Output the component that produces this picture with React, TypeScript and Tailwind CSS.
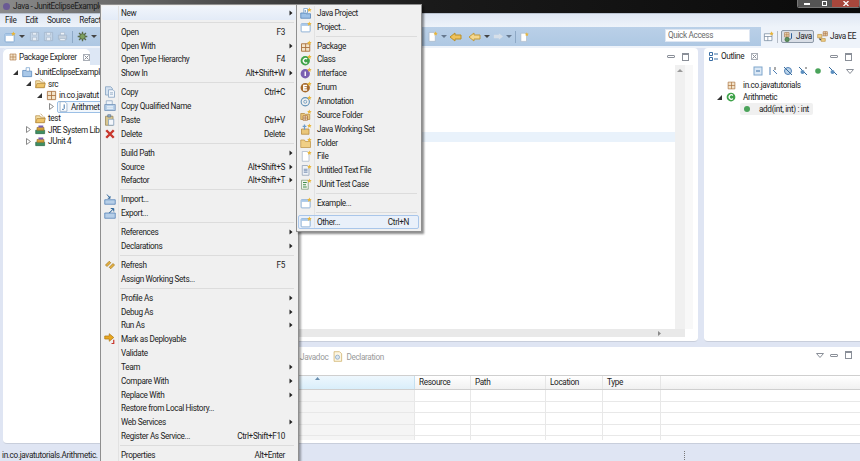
import React from "react";

type IconName = "wiz" | "javaProj" | "pkg" | "cls" | "iface" | "enum" | "anno" | "srcFolder" | "workSet" | "folder" | "file" | "txt" | "junit" | "copy" | "copyQ" | "paste" | "del" | "imp" | "exp" | "refresh" | "deploy" | "pkgPlain" | "clsPlain" | "jfile" | "lib" | "project" | "save" | "print" | "gear" | "decl" | "persp" | "javaP" | "eeP" | "openFolder";

function Star() {
  return <path d="M12.5 0.5l.9 2 2.1.3-1.5 1.5.4 2.1-1.9-1-1.9 1 .4-2.1-1.5-1.5 2.1-.3z" fill="#e8b53a" />;
}
function Circ({ c, d }: { c: string; d: string }) {
  return (
    <>
      <circle cx="7" cy="9" r="6.2" fill={c} />
      <path d={d} fill="none" stroke="#fff" strokeWidth="1.8" />
    </>
  );
}
function Icon({ name, size = 12 }: { name: IconName; size?: number }) {
  let g: React.ReactNode = null;
  if (name === "wiz") g = <><rect x="1.5" y="3.5" width="12" height="11" rx="1" fill="#fff" stroke="#6d9bc9" /><rect x="1.5" y="3.5" width="12" height="3" fill="#a9c8e8" /><Star /></>;
  if (name === "javaProj") g = <><path d="M1 8h6l1 1h6v6H1z" fill="#9cc0e6" stroke="#4f7fb4" /><path d="M5 2h5v6H5z" fill="#fff" stroke="#6d9bc9" /><path d="M7 4v3" stroke="#3a6ea5" /><Star /></>;
  if (name === "pkg") g = <><path d="M2 5h11v10H2zM2 10h11M7.5 5v10" fill="#f3e3c8" stroke="#a9703d" strokeWidth="1.2" /><Star /></>;
  if (name === "pkgPlain") g = <path d="M2 2h12v12H2zM2 8h12M8 2v12" fill="#f3e3c8" stroke="#a9703d" strokeWidth="1.2" />;
  if (name === "cls") g = <><Circ c="#3fa34a" d="M9.5 6.8a3 3 0 1 0 0 4.4" /><Star /></>;
  if (name === "clsPlain") g = <><circle cx="8" cy="8" r="7" fill="#3fa34a" /><path d="M11 5.500a3.500 3.500 0 1 0 0 5" fill="none" stroke="#fff" strokeWidth="2" /></>;
  if (name === "iface") g = <><Circ c="#7a5fb0" d="M7 6v6" /><Star /></>;
  if (name === "enum") g = <><Circ c="#a5682a" d="M9.5 6H5v6h4.500M5 9h4" /><Star /></>;
  if (name === "anno") g = <><circle cx="7" cy="9" r="5.500" fill="none" stroke="#5f8fb5" strokeWidth="1.4" /><circle cx="7" cy="9" r="2" fill="none" stroke="#5f8fb5" /><Star /></>;
  if (name === "srcFolder") g = <><path d="M1 6h5l1 1h6v7H1z" fill="#eac77a" stroke="#b3873c" /><path d="M4 9h6v6H4zM4 12h6M7 9v6" fill="#f3e3c8" stroke="#a9703d" /><Star /></>;
  if (name === "workSet") g = <><path d="M2 8h10v7H2z" fill="#eac77a" stroke="#b3873c" /><path d="M6 2v7M3.500 4.500h5" stroke="#6d9bc9" strokeWidth="1.6" /><Star /></>;
  if (name === "folder") g = <><path d="M1 4h5l1 2h7v8H1z" fill="#f0cf85" stroke="#bd9346" /><Star /></>;
  if (name === "openFolder") g = <><path d="M1 4h6l1 2h6v8H1z" fill="#f4e0aa" stroke="#b3873c" /><path d="M1 14l2-6h12l-2 6z" fill="#eec46a" stroke="#b3873c" /><path d="M8 1l3 3" stroke="#b3873c" /></>;
  if (name === "file") g = <><path d="M3 2h7l2 2v11H3z" fill="#fff" stroke="#a8b6c6" /><Star /></>;
  if (name === "txt") g = <><path d="M3 2h7l2 2v11H3z" fill="#eef2f7" stroke="#8c9bb0" /><path d="M5 7h5M5 9h5M5 11h5" stroke="#5876a0" /><Star /></>;
  if (name === "junit") g = <><path d="M2 3h9v12H2z" fill="#f2f6ee" stroke="#7e9a76" /><path d="M4 6h5M4 9h4M4 12h5" stroke="#3d8a45" strokeWidth="1.3" /><Star /></>;
  if (name === "copy") g = <><path d="M2 1h7l2 2v9H2z" fill="#d5e2f0" stroke="#7f9dbd" /><path d="M6 5h6l2 2v8H6z" fill="#f2f6fb" stroke="#7f9dbd" /><path d="M8 9h4M8 11h4" stroke="#8ea7c2" /></>;
  if (name === "copyQ") g = <><path d="M3 1h8v6H3z" fill="#eef3f9" stroke="#8ea7c2" /><path d="M1 6h14v8H1z" fill="#b7cfe8" stroke="#6d8fb5" /><path d="M4 9h8M4 11h8" stroke="#fff" /></>;
  if (name === "paste") g = <><path d="M2 3h10v12H2z" fill="#d9c690" stroke="#96855a" /><path d="M5 1h4v3H5z" fill="#9fb5cc" stroke="#62788f" /><path d="M6 7h7v8H6z" fill="#f3f6fb" stroke="#7f9dbd" /></>;
  if (name === "del") g = <path d="M3 3l10 10M13 3L3 13" stroke="#c8372d" strokeWidth="3.2" />;
  if (name === "imp") g = <><path d="M1 9h14v6H1z" fill="#b7cfe8" stroke="#4f7fb4" /><path d="M4 2l4 5M8 7V4M8 7H5" fill="none" stroke="#33699c" strokeWidth="1.3" /></>;
  if (name === "exp") g = <><path d="M1 8h14v7H1z" fill="#b7cfe8" stroke="#4f7fb4" /><path d="M7 8l6-6M13 2v4M13 2H9" fill="none" stroke="#33699c" strokeWidth="1.4" /></>;
  if (name === "refresh") g = <><path d="M2 8l5-5 2 2-5 5z" fill="#e5b040" stroke="#a37a22" /><path d="M14 8l-5 5-2-2 5-5z" fill="#e5b040" stroke="#a37a22" /></>;
  if (name === "deploy") g = <><path d="M1 4h6V1l6 5-6 5V8H1z" fill="#e8a722" stroke="#b27a10" /><path d="M13 9v5h-3" fill="none" stroke="#c8372d" strokeWidth="1.6" /></>;
  if (name === "jfile") g = <><path d="M3 1h7l3 3v11H3z" fill="#fff" stroke="#7f9dbd" /><path d="M9 5v6a2 2 0 0 1-3 1" fill="none" stroke="#3a6ea5" strokeWidth="1.4" /></>;
  if (name === "lib") g = <><path d="M1 9h13v5H1z" fill="#3e8f63" stroke="#2b6a48" /><path d="M3 5h10v4H3z" fill="#d8a23a" stroke="#99701d" /><path d="M5 2h7v3H5z" fill="#7a5fb0" /></>;
  if (name === "project") g = <><path d="M1 5h5l1 1h7v8H1z" fill="#a9c8e8" stroke="#4f7fb4" /><path d="M6 1h5v5H6z" fill="#fff" stroke="#6d9bc9" /></>;
  if (name === "save") g = <><path d="M2 2h12v12H2z" fill="#c5d6e8" stroke="#9fb2c7" /><path d="M5 2h6v4H5zM5 9h6v5H5z" fill="#e6edf5" stroke="#a8b8ca" /></>;
  if (name === "print") g = <><path d="M5 2h6v4H5z" fill="#eef3f9" stroke="#a8b8ca" /><path d="M2 6h12v6H2z" fill="#c5d0dc" stroke="#9fb2c7" /><path d="M4 11h8v3H4z" fill="#eef3f9" stroke="#a8b8ca" /></>;
  if (name === "gear") g = <><path d="M8 1v14M1 8h14M3 3l10 10M13 3L3 13" stroke="#5a6b4a" strokeWidth="2" /><circle cx="8" cy="8" r="4" fill="#7ea05e" stroke="#4a5a3a" /></>;
  if (name === "decl") g = <><path d="M3 1h8l3 3v11H3z" fill="#fdf6e3" stroke="#c9a95a" /><circle cx="8" cy="9" r="3" fill="#d8e6f3" stroke="#7f9dbd" /></>;
  if (name === "persp") g = <><path d="M2 4h11v10H2zM2 8h11M7 8v6" fill="#fff" stroke="#6b7f96" /><Star /></>;
  if (name === "javaP") g = <><path d="M1 1h7v7H1zM1 4.500h7M4.500 1v7" fill="#f3e3c8" stroke="#a9703d" /><circle cx="5" cy="12" r="3.500" fill="#5c8f5c" stroke="#3a6a3a" /><path d="M12 2v8a2 2 0 0 1-3 1" fill="none" stroke="#2f5f9a" strokeWidth="1.6" /></>;
  if (name === "eeP") g = <><path d="M9 1h6v6H9zM9 4h6M12 1v6" fill="#f3e3c8" stroke="#a9703d" /><path d="M1 5h6v5H1z" fill="#f0cf85" stroke="#bd9346" /><path d="M6 11h6v4H6z" fill="#f0cf85" stroke="#bd9346" /><path d="M4 10v3h2M8 7h1" stroke="#777" /></>;
  return <svg width={size} height={size} viewBox="0 0 16 16" className="shrink-0">{g}</svg>;
}

function Arrow() {
  return <svg width="4" height="6" viewBox="0 0 4 6"><path d="M0.5 0.5L3.5 3L0.5 5.5z" fill="#222" /></svg>;
}
function Twisty({ open }: { open: boolean }) {
  return open ? (
    <svg width="5" height="5" viewBox="0 0 5 5" className="shrink-0"><path d="M5 0v5H0z" fill="#333" /></svg>
  ) : (
    <svg width="5" height="7" viewBox="0 0 5 7" className="shrink-0"><path d="M0.5 0.5L4.500 3.500L0.5 6.500z" fill="#fff" stroke="#8a8a8a" /></svg>
  );
}
function CloseX() {
  return (
    <svg width="7" height="7" viewBox="0 0 7 7" className="shrink-0">
      <rect x="0.5" y="0.5" width="6" height="6" fill="#fff" stroke="#a9aeb6" />
      <path d="M1.500 1.500l4 4M5.500 1.500l-4 4" stroke="#8a8f98" />
    </svg>
  );
}
function MinMax() {
  return (
    <div className="flex items-center gap-[7px]">
      <div className="w-[8px] h-[3px] border border-[#8a8f98] bg-white rounded-[1px]" />
      <div className="w-[7px] h-[8px] border border-[#8a8f98] border-t-2 bg-white" />
    </div>
  );
}
function Chevron() {
  return <svg width="8" height="5" viewBox="0 0 8 5"><path d="M0.5 0.5h7L4 4.500z" fill="#fff" stroke="#8a8f98" /></svg>;
}
function Drop({ c = "#444" }: { c?: string }) {
  return <svg width="6" height="3" viewBox="0 0 6 3" className="shrink-0"><path d="M0 0h6L3 3z" fill={c} /></svg>;
}

type Row = { t?: string; k?: string; sub?: boolean; i?: IconName; hl?: "soft" | "strong"; sep?: boolean };

const mainMenu: Row[] = [
  { t: "New", sub: true, hl: "soft" }, { sep: true },
  { t: "Open", k: "F3" }, { t: "Open With", sub: true }, { t: "Open Type Hierarchy", k: "F4" }, { t: "Show In", k: "Alt+Shift+W", sub: true }, { sep: true },
  { t: "Copy", k: "Ctrl+C", i: "copy" }, { t: "Copy Qualified Name", i: "copyQ" }, { t: "Paste", k: "Ctrl+V", i: "paste" }, { t: "Delete", k: "Delete", i: "del" }, { sep: true },
  { t: "Build Path", sub: true }, { t: "Source", k: "Alt+Shift+S", sub: true }, { t: "Refactor", k: "Alt+Shift+T", sub: true }, { sep: true },
  { t: "Import...", i: "imp" }, { t: "Export...", i: "exp" }, { sep: true },
  { t: "References", sub: true }, { t: "Declarations", sub: true }, { sep: true },
  { t: "Refresh", k: "F5", i: "refresh" }, { t: "Assign Working Sets..." }, { sep: true },
  { t: "Profile As", sub: true }, { t: "Debug As", sub: true }, { t: "Run As", sub: true }, { t: "Mark as Deployable", i: "deploy" }, { t: "Validate" }, { t: "Team", sub: true }, { t: "Compare With", sub: true }, { t: "Replace With", sub: true }, { t: "Restore from Local History..." }, { t: "Web Services", sub: true }, { t: "Register As Service...", k: "Ctrl+Shift+F10" }, { sep: true },
  { t: "Properties", k: "Alt+Enter" },
];

const subMenu: Row[] = [
  { t: "Java Project", i: "javaProj" }, { t: "Project...", i: "wiz" }, { sep: true },
  { t: "Package", i: "pkg" }, { t: "Class", i: "cls" }, { t: "Interface", i: "iface" }, { t: "Enum", i: "enum" }, { t: "Annotation", i: "anno" }, { t: "Source Folder", i: "srcFolder" }, { t: "Java Working Set", i: "workSet" }, { t: "Folder", i: "folder" }, { t: "File", i: "file" }, { t: "Untitled Text File", i: "txt" }, { t: "JUnit Test Case", i: "junit" }, { sep: true },
  { t: "Example...", i: "wiz" }, { sep: true },
  { t: "Other...", k: "Ctrl+N", i: "wiz", hl: "strong" },
];

function MenuRows({ rows, arrowCol }: { rows: Row[]; arrowCol: string }) {
  return (
    <>
      {rows.map((r, idx) =>
        r.sep ? (
          <div key={idx} className="flex h-[5.1px] items-center">
            <div className="w-[17px] self-stretch border-r border-[#e2e2e2]" />
            <div className="flex-1 h-px bg-[#dcdcdc] ml-[1px] mr-[2px]" />
          </div>
        ) : (
          <div
            key={idx}
            className={
              "flex h-[13.85px] items-center rounded-[2px] " +
              (r.hl === "soft"
                ? "bg-gradient-to-b from-[#f1f5fb] to-[#e3ebf7] "
                : r.hl === "strong"
                ? "bg-[#e9f0fa] outline outline-1 -outline-offset-1 outline-[#a9c6ea] "
                : "")
            }
          >
            <div className="w-[17px] self-stretch flex items-center justify-center border-r border-[#e2e2e2]">
              {r.i && <Icon name={r.i} />}
            </div>
            <div className="flex-1 pl-[2px] whitespace-nowrap">{r.t}</div>
            {r.k && <div className="whitespace-nowrap">{r.k}</div>}
            <div className={arrowCol + " flex items-center justify-center"}>{r.sub && <Arrow />}</div>
          </div>
        )
      )}
    </>
  );
}

function TreeRow({ pad, open, icon, text, selected }: { pad: number; open?: boolean; icon: IconName; text: string; selected?: boolean }) {
  return (
    <div className="h-[11.5px] flex items-center whitespace-nowrap" style={{ paddingLeft: pad }}>
      <div className={(selected ? "w-[8px]" : "w-[9px]") + " flex items-center shrink-0"}>{open !== undefined && <Twisty open={open} />}</div>
      {selected ? (
        <div className="flex items-center gap-[2px] h-[11.5px] border border-[#9cc0e6] rounded-[2px] pr-[40px] bg-[#f2f7fc]">
          <Icon name={icon} size={11} />
          <span>{text}</span>
        </div>
      ) : (
        <>
          <Icon name={icon} size={11} />
          <span className="ml-[2px]">{text}</span>
        </>
      )}
    </div>
  );
}

export default function App() {
  return (
    <div className="relative w-[860px] h-[461px] overflow-hidden bg-[#dfe5f3] flex flex-col text-[8.2px] tracking-[-0.35px] leading-none text-[#222] font-['Roboto',sans-serif]">
      {/* Title bar */}
      <div className="h-[13px] shrink-0 flex items-center justify-between bg-gradient-to-r from-[#8b8b8b] via-[#1a1a1a] to-[#0a0a0a]">
        <div className="flex items-center pl-[3px] gap-[3px]">
          <div className="w-[7px] h-[7px] rounded-full bg-[#6a5a94]" />
          <span className="text-[#1a1a1a]">Java - JunitEclipseExample</span>
        </div>
        <div className="flex self-start h-[8px] rounded-b-[2px] overflow-hidden border border-t-0 border-[#777]">
          <div className="w-[18px] bg-[#555] flex items-center justify-center"><div className="w-[6px] h-[2px] bg-white" /></div>
          <div className="w-[16px] bg-[#555] flex items-center justify-center"><div className="w-[5px] h-[5px] border border-white" /></div>
          <div className="w-[27px] bg-[#a8473c] flex items-center justify-center">
            <svg width="6" height="5" viewBox="0 0 6 5"><path d="M0.5 0l5 5M5.500 0l-5 5" stroke="#fff" strokeWidth="1.300" /></svg>
          </div>
        </div>
      </div>
      {/* Menu bar */}
      <div className="h-[14px] shrink-0 bg-gradient-to-b from-[#dfe7f3] to-[#eef3fa] border-t border-[#b9c2cf] flex items-center pl-[5px] gap-[9px]">
        <span>File</span><span>Edit</span><span>Source</span><span>Refactor</span>
      </div>
      {/* Toolbar */}
      <div className="h-[21px] shrink-0 flex bg-[#eef3fa]">
        <div className="w-[761px] shrink-0 h-[19px] bg-gradient-to-b from-[#bad0e8] to-[#aec8e3] relative flex items-center pl-[4px]">
          <div className="flex items-center">
            <Icon name="wiz" /><div className="ml-[3px]"><Drop /></div>
            <div className="ml-[4px]"><Icon name="save" size={11} /></div>
            <div className="ml-[3px]"><Icon name="save" size={11} /></div>
            <div className="ml-[3px]"><Icon name="print" size={11} /></div>
            <div className="ml-[4px] w-px h-[12px] bg-[#8ea9c6]" />
            <div className="ml-[4px]"><Icon name="gear" size={11} /></div>
            <div className="ml-[3px]"><Drop /></div>
          </div>
          <div className="ml-auto mr-[232px] flex items-center gap-[3px]">
            <Icon name="file" size={11} /><Drop c="#66788e" />
            <svg width="12" height="10" viewBox="0 0 12 10"><path d="M0 5l5-4v2h6v4H5v2z" fill="#eec15a" stroke="#b98f2b" /></svg>
            <div className="w-[1px]" />
            <svg width="12" height="10" viewBox="0 0 12 10"><path d="M0 5l5-4v2h6v4H5v2z" fill="#f4d78e" stroke="#c39a3a" /></svg>
            <Drop />
            <svg width="10" height="9" viewBox="0 0 12 10"><path d="M12 5L7 1v2H1v4h6v2z" fill="#d6dfe9" /></svg>
            <Drop c="#66788e" />
            <div className="w-px h-[12px] bg-[#8ea9c6]" />
            <Icon name="file" size={10} />
          </div>
          <div className="absolute right-[11px] top-[2px] w-[85px] h-[13px] bg-white flex items-center pl-[2px] text-[#6a6a6a] border border-[#dfe7f3]">Quick Access</div>
        </div>
        <div className="flex items-center h-[19px] flex-1 min-w-0 pl-[2px] gap-[3px] whitespace-nowrap">
          <div className="h-[13px] border-l border-dotted border-[#555] mr-[4px] -ml-[8px]" />
          <Icon name="persp" size={11} />
          <div className="w-px h-[12px] bg-[#b5bcc6]" />
          <div className="flex items-center gap-[2px] h-[13px] w-[33px] px-[2px] bg-[#d9dee6] border border-[#8d99a8] rounded-[2px]">
            <Icon name="javaP" size={10} /><span>Java</span>
          </div>
          <div className="flex items-center gap-[2px]">
            <Icon name="eeP" size={11} /><span>Java EE</span>
          </div>
        </div>
      </div>
      {/* Main */}
      <div className="flex-1 min-h-0 flex gap-[5px] pl-[3px]">
        <section className="w-[237px] bg-white rounded-[4px] flex flex-col overflow-hidden border-b border-[#c8cedb]">
          <div className="h-[17px] shrink-0 bg-[#dde7f5] flex">
            <div className="w-[87px] mt-[1px] bg-white rounded-t-[5px] flex items-center pl-[6px] gap-[2px] whitespace-nowrap">
              <Icon name="pkgPlain" size={8} />
              <span>Package Explorer</span>
              <div className="ml-[4px]"><CloseX /></div>
            </div>
          </div>
          <div className="pt-[1.5px]">
            <TreeRow pad={10} open icon="project" text="JunitEclipseExample" />
            <TreeRow pad={23} open icon="openFolder" text="src" />
            <TreeRow pad={34} open icon="pkgPlain" text="in.co.javatut" />
            <TreeRow pad={46} open={false} icon="jfile" text="Arithmet" selected />
            <TreeRow pad={23} icon="openFolder" text="test" />
            <TreeRow pad={23} open={false} icon="lib" text="JRE System Libra" />
            <TreeRow pad={23} open={false} icon="lib" text="JUnit 4" />
          </div>
        </section>
        <div className="flex-1 min-w-0 flex flex-col gap-[5px]">
          <div className="h-[294px] shrink-0 flex gap-[6px]">
            {/* Editor */}
            <section className="w-[453px] bg-white rounded-[4px] flex flex-col overflow-hidden border-b border-[#c8cedb]">
              <div className="h-[17px] shrink-0 flex items-center justify-end pr-[9px]"><MinMax /></div>
              <div className="flex-1 flex pr-[5px]">
                <div className="flex-1 flex flex-col">
                  <div className="mt-[67px] h-[10px] bg-[#e9f2fb]" />
                  <div className="flex-1" />
                </div>
                <div className="w-[10px] bg-[#f0f0f0] flex justify-center pt-[4px]">
                  <svg width="6" height="3" viewBox="0 0 6 3"><path d="M0 3h6L3 0z" fill="#9a9a9a" /></svg>
                </div>
                <div className="w-[8px] bg-[#f8f8f8]" />
              </div>
              <div className="h-[8px] shrink-0 bg-[#e9e9e9] mr-[13px] flex items-center justify-end pr-[24px] mb-[4px]">
                <svg width="3" height="5" viewBox="0 0 3 5"><path d="M0 0l3 2.500L0 5z" fill="#8a8a8a" /></svg>
              </div>
            </section>
            {/* Outline */}
            <section className="flex-1 bg-white rounded-l-[4px] flex flex-col overflow-hidden border-b border-[#c8cedb]">
              <div className="h-[17px] shrink-0 flex items-center">
                <div className="ml-[5px] w-[55px] flex items-center gap-[3px] whitespace-nowrap">
                  <svg width="9" height="9" viewBox="0 0 9 9"><path d="M0.5 0.5h3v3h-3zM0.5 5.500h3v3h-3z" fill="none" stroke="#3a6ea5" /><path d="M5 2h4M5 7h4" stroke="#3a6ea5" /></svg>
                  <span>Outline</span>
                  <div className="ml-[4px]"><CloseX /></div>
                </div>
                <div className="ml-auto pr-[8px]"><MinMax /></div>
              </div>
              <div className="h-[12px] shrink-0 flex items-center justify-end pr-[6px] gap-[5px]">
                <svg width="10" height="10" viewBox="0 0 10 10"><rect x="1" y="1" width="8" height="8" fill="#dbe8f5" stroke="#7fa6cc" /><path d="M3 5h4" stroke="#3a6ea5" /></svg>
                <svg width="10" height="10" viewBox="0 0 10 10"><path d="M2 1v8M5 4l4 4" stroke="#4f7fb4" /><path d="M7 1v3" stroke="#555" /></svg>
                <svg width="10" height="10" viewBox="0 0 10 10"><circle cx="5" cy="5" r="3.500" fill="#bcd4ea" stroke="#4f7fb4" /><path d="M1 1l8 8" stroke="#33699c" /></svg>
                <svg width="10" height="10" viewBox="0 0 10 10"><path d="M1 1l8 8" stroke="#33699c" /><circle cx="4.500" cy="6" r="2" fill="#5b8fc0" /><path d="M8 1v2" stroke="#555" /></svg>
                <svg width="10" height="10" viewBox="0 0 10 10"><circle cx="5" cy="5" r="2.800" fill="#4aa35a" /></svg>
                <svg width="10" height="10" viewBox="0 0 10 10"><path d="M1 1l8 8" stroke="#33699c" /><circle cx="4.500" cy="6" r="2" fill="#5b8fc0" /></svg>
                <div className="ml-[3px]"><Chevron /></div>
              </div>
              <div className="pt-[2.5px]">
                <div className="h-[12px] flex items-center pl-[23px] gap-[7px] whitespace-nowrap"><Icon name="pkgPlain" size={9} /><span>in.co.javatutorials</span></div>
                <div className="h-[11.500px] flex items-center pl-[13px] whitespace-nowrap"><div className="w-[9px]"><Twisty open /></div><Icon name="clsPlain" size={10} /><span className="ml-[7px]">Arithmetic</span></div>
                <div className="h-[11.500px] ml-[36px] mr-[47px] bg-[#f0f0f0] rounded-[2px] flex items-center pl-[4px] gap-[9px] whitespace-nowrap">
                  <span className="w-[6px] h-[6px] rounded-full bg-[#4aa35a]" />
                  <span>add(int, int) : int</span>
                </div>
              </div>
            </section>
          </div>
          {/* Bottom */}
          <section className="h-[97px] shrink-0 bg-white rounded-l-[4px] flex flex-col overflow-hidden border-b border-[#c8cedb]">
            <div className="h-[28px] shrink-0 flex items-start pt-[4px] pl-[55px]">
              <span className="text-[#9a9a9a] mt-[2px]">Javadoc</span>
              <div className="ml-[4px]"><Icon name="decl" size={11} /></div>
              <span className="text-[#9a9a9a] ml-[3px] mt-[2px]">Declaration</span>
              <div className="ml-auto flex items-center gap-[6px] pr-[8px]"><Chevron /><MinMax /></div>
            </div>
            <div className="h-[15px] shrink-0 grid grid-cols-[170px_56px_75px_57px_58px_1fr] border-t border-[#cfcfcf] border-b bg-gradient-to-b from-white to-[#f1f1f1]">
              <div className="bg-gradient-to-b from-[#eef7fd] to-[#d9eefa] border-r border-[#c5e0f0] relative flex justify-end">
                <svg width="5" height="3" viewBox="0 0 5 3" className="mr-[94px] mt-[1px]"><path d="M0 3h5L2.500 0z" fill="#6a8fb0" /></svg>
              </div>
              <div className="pl-[4px] flex items-center border-r border-[#e6e6e6]">Resource</div>
              <div className="pl-[4px] flex items-center border-r border-[#e6e6e6]">Path</div>
              <div className="pl-[4px] flex items-center border-r border-[#e6e6e6]">Location</div>
              <div className="pl-[4px] flex items-center border-r border-[#e6e6e6]">Type</div>
              <div />
            </div>
            {[0, 1, 2, 3, 4].map((r) => (
              <div key={r} className={"shrink-0 grid grid-cols-[170px_56px_75px_57px_58px_1fr] border-b border-[#e8e8e8] " + (r === 4 ? "h-[4px] border-b-0" : "h-[11.500px]")}>
                <div className="bg-[#f5f5f5] border-r border-[#e8e8e8]" />
                <div className="border-r border-[#e8e8e8]" />
                <div className="border-r border-[#e8e8e8]" />
                <div className="border-r border-[#e8e8e8]" />
                <div className="border-r border-[#e8e8e8]" />
                <div />
              </div>
            ))}
          </section>
        </div>
      </div>
      {/* Status bar */}
      <div className="h-[17px] shrink-0 flex items-center pl-[2px] relative">
        <span className="mt-[5px] whitespace-nowrap">in.co.javatutorials.Arithmetic.</span>
        <div className="absolute left-[684px] top-[7px] h-[9px] border-l border-dotted border-[#777]" />
      </div>

      {/* Context menu */}
      <div className="absolute left-[100px] top-[4px] w-[199px] h-[470px] bg-[#f0f0f0] border border-[#8f8f8f] pt-[1px] pl-[1px] pr-[2px] shadow-[2px_2px_2px_rgba(0,0,0,0.35)]">
        <MenuRows rows={mainMenu} arrowCol="w-[11px]" />
      </div>
      {/* Submenu */}
      <div className="absolute left-[296px] top-[4px] w-[126px] bg-[#f0f0f0] border border-[#8f8f8f] pt-[1px] pb-[2px] pl-[1px] pr-[2px] shadow-[2px_2px_2px_rgba(0,0,0,0.45)]">
        <MenuRows rows={subMenu} arrowCol="w-[10px]" />
      </div>
    </div>
  );
}
